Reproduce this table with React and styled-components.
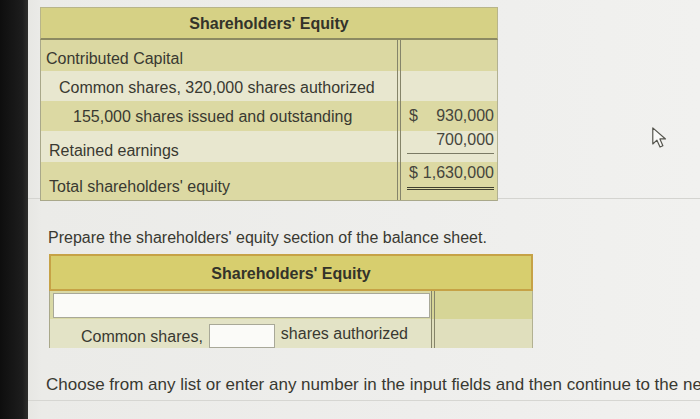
import styled, { createGlobalStyle } from 'styled-components'

/* STYLE */

const Global = createGlobalStyle`
  html, body {
    margin: 0;
    padding: 0;
    background: #ebebe8;
  }
  body {
    font-family: "Liberation Sans", Arial, sans-serif;
    color: #393931;
  }
`

const Page = styled.div`
  position: relative;
  display: flex;
  width: 700px;
  height: 419px;
  overflow: hidden;
  background: linear-gradient(90deg, #dededa 0%, #ebebe8 6%, #eeeeec 60%, #f1f1ef 100%);
`

const Bezel = styled.div`
  width: 28px;
  flex-shrink: 0;
  background: linear-gradient(90deg, #0e0e0e 0%, #1d1d1d 80%, #2e2e2c 100%);
`

const Screen = styled.div`
  flex: 1;
  display: flex;
  flex-direction: column;
  min-width: 0;
`

const TopSection = styled.div`
  height: 199px;
  padding: 7px 0 0 12px;
  border-bottom: 1px solid #d4d4d0;
  box-sizing: border-box;
`

const Table = styled.div`
  width: ${p => p.$width}px;
  margin: ${p => p.$top || 0}px 0 0 ${p => p.$left || 0}px;
  border-left: 1px solid #a9a88a;
  border-right: 1px solid #b2b192;
  box-sizing: border-box;
`

const Header = styled.div`
  height: ${p => p.$h}px;
  display: flex;
  align-items: center;
  justify-content: center;
  padding-top: ${p => p.$pt || 0}px;
  font-weight: bold;
  font-size: 16px;
  color: #33332a;
  background: ${p => p.$bg};
  border: ${p => p.$border};
  border-bottom: ${p => p.$bottom};
  box-sizing: border-box;
  margin: 0 -1px;
`

const Row = styled.div`
  display: flex;
  height: ${p => p.$h}px;
  background: ${p => p.$bg};
  border-bottom: ${p => (p.$last ? '1px solid #a9a88a' : 'none')};
`

const Label = styled.div`
  flex: 1;
  display: flex;
  align-items: ${p => (p.$center ? 'center' : 'flex-end')};
  padding: 0 0 ${p => p.$pb || 0}px ${p => p.$indent}px;
  font-size: 16px;
  line-height: 18px;
  white-space: nowrap;
  gap: 6px;
`

const AmountCell = styled.div`
  width: ${p => p.$w}px;
  flex-shrink: 0;
  display: flex;
  flex-direction: column;
  justify-content: ${p => (p.$top ? 'flex-start' : 'center')};
  padding: 0 3px 0 6px;
  border-left: 4px double #85846a;
  background: ${p => p.$bg || 'transparent'};
  box-sizing: border-box;
`

const Amount = styled.div`
  display: flex;
  justify-content: space-between;
  font-size: 16px;
  line-height: 18px;
  color: #45453c;
  margin-top: ${p => p.$mt || 0}px;
  padding: 0 0 ${p => p.$pb || 0}px 2px;
  border-bottom: ${p => p.$rule === 'double' ? '3px double #3f3f30' : p.$rule === 'single' ? '1px solid #7a7a64' : 'none'};
`

const Prompt = styled.div`
  margin: 30px 0 0 20px;
  font-size: 16px;
  line-height: 18px;
  white-space: nowrap;
`

const Field = styled.div`
  width: ${p => p.$w}px;
  height: ${p => p.$h}px;
  margin: ${p => p.$m || 0};
  background: #fbfbf8;
  border: 1px solid #a8a898;
  box-sizing: border-box;
  flex-shrink: 0;
`

const Instructions = styled.div`
  margin-top: 27px;
  padding: 0 0 5px 18px;
  font-size: 17px;
  line-height: 20px;
  white-space: nowrap;
  overflow: hidden;
  border-bottom: 1px solid #d6d6d2;
`

const Cursor = styled.svg`
  position: absolute;
  left: 651px;
  top: 126px;
`

/* JSX */

const App = () => {
  return (
    <>
      <Global />
      <Page>
        <Bezel />
        <Screen>
          <TopSection>
            <Table $width={458}>
              <Header $h={33} $pt={2} $bg="#d6d185" $border="1px solid #b8b58a" $bottom="2px solid #8c8a62">
                Shareholders' Equity
              </Header>
              <Row $h={31} $bg="#dbd8a2">
                <Label $indent={5} $pb={3}>Contributed Capital</Label>
                <AmountCell $w={100} />
              </Row>
              <Row $h={30} $bg="#e8e7cf">
                <Label $indent={18} $pb={4}>Common shares, 320,000 shares authorized</Label>
                <AmountCell $w={100} />
              </Row>
              <Row $h={30} $bg="#dcd9a3">
                <Label $indent={32} $pb={5}>155,000 shares issued and outstanding</Label>
                <AmountCell $w={100}>
                  <Amount>
                    <span>$</span>
                    <span>930,000</span>
                  </Amount>
                </AmountCell>
              </Row>
              <Row $h={31} $bg="#e8e7cf">
                <Label $indent={8} $pb={2}>Retained earnings</Label>
                <AmountCell $w={100} $top>
                  <Amount $rule="single" $pb={4}>
                    <span />
                    <span>700,000</span>
                  </Amount>
                </AmountCell>
              </Row>
              <Row $h={38} $bg="#dcd9a3" $last>
                <Label $indent={8} $pb={4}>Total shareholders' equity</Label>
                <AmountCell $w={100} $top>
                  <Amount $rule="double" $mt={2} $pb={5}>
                    <span>$</span>
                    <span>1,630,000</span>
                  </Amount>
                </AmountCell>
              </Row>
            </Table>
          </TopSection>

          <Prompt>Prepare the shareholders' equity section of the balance sheet.</Prompt>

          <Table $width={484} $left={21} $top={7}>
            <Header $h={37} $pt={2} $bg="#d7ce6e" $border="2px solid #c6a246" $bottom="2px solid #c6a246">
              Shareholders' Equity
            </Header>
            <Row $h={28} $bg="#d9d9a6">
              <Label $indent={3} $center>
                <Field $w={377} $h={25} />
              </Label>
              <AmountCell $w={101} $bg="#d6d596" />
            </Row>
            <Row $h={29} $bg="#e3e3c6">
              <Label $indent={31} $pb={2}>
                <span>Common shares,</span>
                <Field $w={66} $h={24} $m="0 0 -2px 0" />
                <span style={{ marginBottom: 3 }}>shares authorized</span>
              </Label>
              <AmountCell $w={101} $bg="#e0dfbd" />
            </Row>
          </Table>

          <Instructions>
            Choose from any list or enter any number in the input fields and then continue to the next question.
          </Instructions>
        </Screen>

        <Cursor width="19" height="24" viewBox="0 0 16 20">
          <path
            d="M1.5 1.5 L1.5 15 L5 11.8 L7.6 17.6 L10 16.5 L7.5 10.8 L12.2 10.8 Z"
            fill="#fafaf8"
            stroke="#55554e"
            strokeWidth="1"
            strokeLinejoin="round"
          />
        </Cursor>
      </Page>
    </>
  )
}

export default App
